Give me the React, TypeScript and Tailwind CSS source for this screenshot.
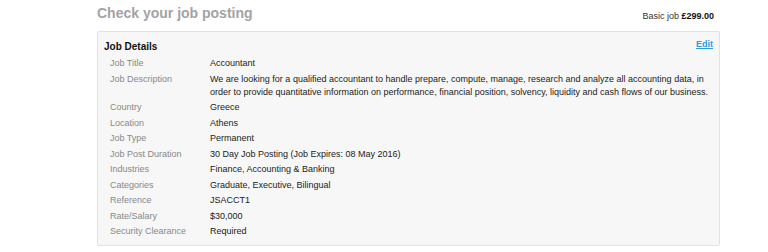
import React from "react";

const rows: [string, React.ReactNode][] = [
  ["Job Title", "Accountant"],
  [
    "Job Description",
    "We are looking for a qualified accountant to handle prepare, compute, manage, research and analyze all accounting data, in order to provide quantitative information on performance, financial position, solvency, liquidity and cash flows of our business.",
  ],
  ["Country", "Greece"],
  ["Location", "Athens"],
  ["Job Type", "Permanent"],
  ["Job Post Duration", "30 Day Job Posting (Job Expires: 08 May 2016)"],
  ["Industries", "Finance, Accounting & Banking"],
  ["Categories", "Graduate, Executive, Bilingual"],
  ["Reference", "JSACCT1"],
  ["Rate/Salary", "$30,000"],
  ["Security Clearance", "Required"],
];

export default function App() {
  return (
    <div
      className="w-[768px] h-[252px] bg-white overflow-hidden"
      style={{ fontFamily: '"Liberation Sans", Arial, sans-serif' }}
    >
      <div className="ml-[97px] w-[623px] pt-[5px]">
        <div className="flex items-start justify-between h-[16px]">
          <h1 className="text-[14px] leading-[16px] font-bold text-[#a3a3a3]">
            Check your job posting
          </h1>
          <div className="text-[9px] leading-[12px] text-[#333] pr-[6px] mt-[5px]">
            Basic job <span className="font-bold text-[#111]">£299.00</span>
          </div>
        </div>
        <div className="mt-[10px] border border-[#d4e5f7] rounded-[2px] bg-[#f7f7f7] h-[215px] px-[6px] pt-[9px]">
          <div className="flex justify-between items-start h-[12px]">
            <h2 className="text-[10px] leading-[12px] font-bold text-[#111]">
              Job Details
            </h2>
            <a className="text-[9px] leading-[12px] font-bold text-[#2f9be0] underline mt-[-3px]">
              Edit
            </a>
          </div>
          <div className="mt-[3px] pl-[6px]">
            {rows.map(([k, v]) => (
              <div key={k} className="flex text-[9px] leading-[13px] py-[1.25px]">
                <div className="w-[100px] shrink-0 text-[#888]">{k}</div>
                <div className="flex-1 text-[#222]">{v}</div>
              </div>
            ))}
          </div>
        </div>
      </div>
    </div>
  );
}
